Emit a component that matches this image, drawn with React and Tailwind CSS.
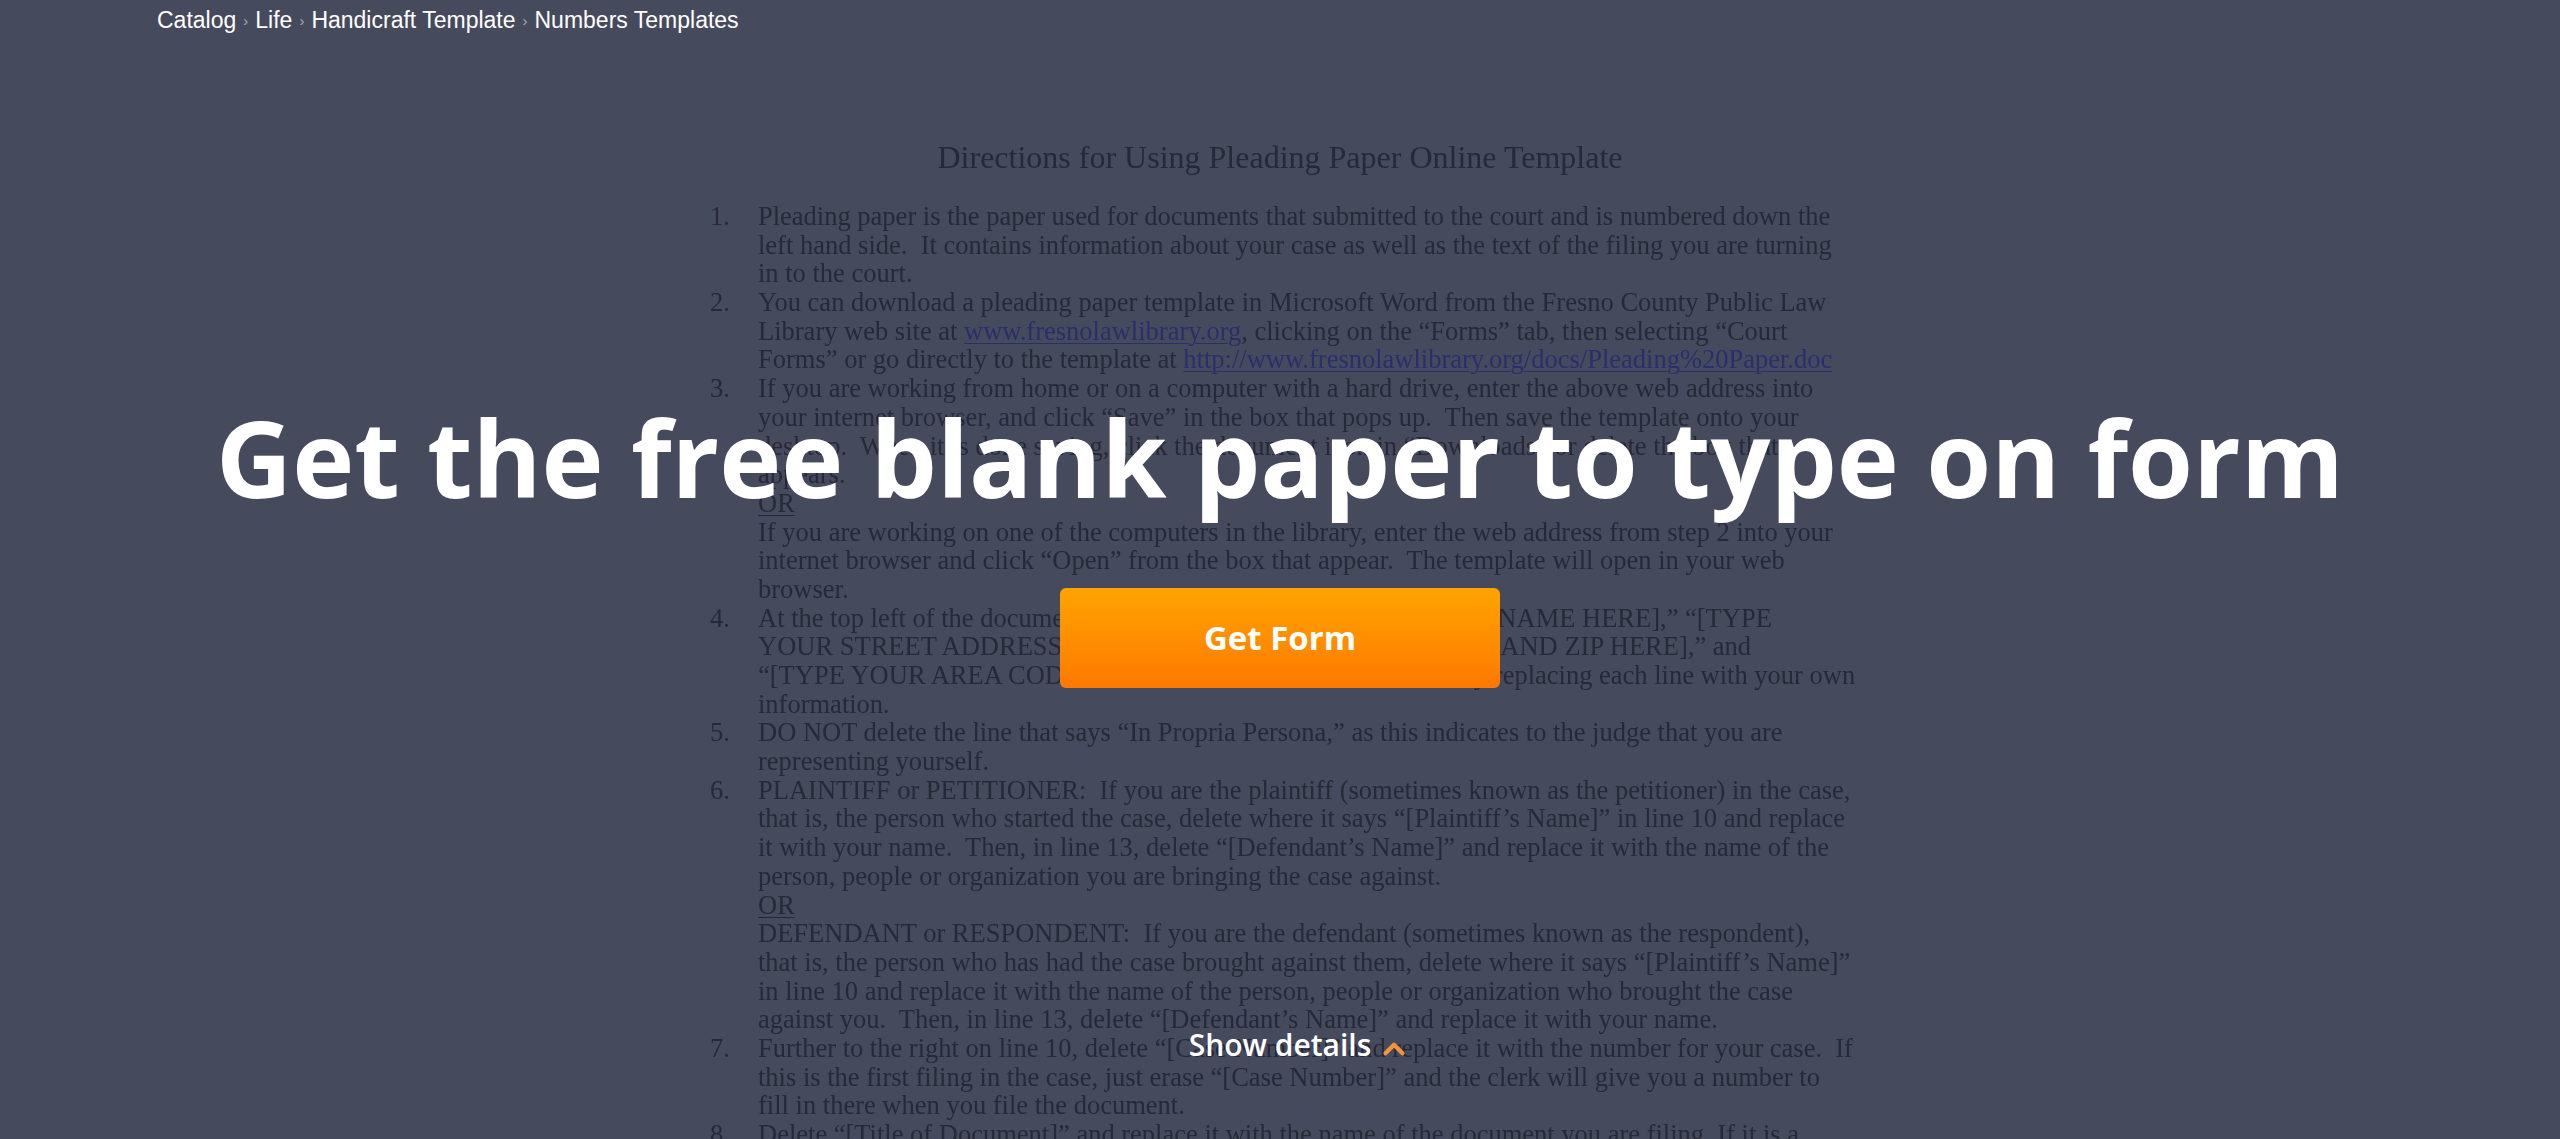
import { ChevronUp } from 'lucide-react';

const Link = ({ children }) => (
  <span className="text-[#2a2f6c] underline decoration-1 underline-offset-[3px]">{children}</span>
);

const Or = () => <span className="underline decoration-1 underline-offset-[3px]">OR</span>;

const items = [
  {
    n: '1.',
    lines: [
      'Pleading paper is the paper used for documents that submitted to the court and is numbered down the',
      'left hand side.  It contains information about your case as well as the text of the filing you are turning',
      'in to the court.',
    ],
  },
  {
    n: '2.',
    lines: [
      'You can download a pleading paper template in Microsoft Word from the Fresno County Public Law',
      <>Library web site at <Link>www.fresnolawlibrary.org</Link>, clicking on the “Forms” tab, then selecting “Court</>,
      <>Forms” or go directly to the template at <Link>http://www.fresnolawlibrary.org/docs/Pleading%20Paper.doc</Link></>,
    ],
  },
  {
    n: '3.',
    lines: [
      'If you are working from home or on a computer with a hard drive, enter the above web address into',
      'your internet browser, and click “Save” in the box that pops up.  Then save the template onto your',
      'desktop.  When it is done saving, click the document icon in “Downloads” or delete the box that',
      'appears.',
      <Or />,
      'If you are working on one of the computers in the library, enter the web address from step 2 into your',
      'internet browser and click “Open” from the box that appear.  The template will open in your web',
      'browser.',
    ],
  },
  {
    n: '4.',
    lines: [
      'At the top left of the document, type your name over “[TYPE YOUR NAME HERE],” “[TYPE',
      'YOUR STREET ADDRESS HERE],” “[TYPE YOUR CITY, STATE AND ZIP HERE],” and',
      '“[TYPE YOUR AREA CODE AND PHONE NUMBER HERE]” by replacing each line with your own',
      'information.',
    ],
  },
  {
    n: '5.',
    lines: [
      'DO NOT delete the line that says “In Propria Persona,” as this indicates to the judge that you are',
      'representing yourself.',
    ],
  },
  {
    n: '6.',
    lines: [
      'PLAINTIFF or PETITIONER:  If you are the plaintiff (sometimes known as the petitioner) in the case,',
      'that is, the person who started the case, delete where it says “[Plaintiff’s Name]” in line 10 and replace',
      'it with your name.  Then, in line 13, delete “[Defendant’s Name]” and replace it with the name of the',
      'person, people or organization you are bringing the case against.',
      <Or />,
      'DEFENDANT or RESPONDENT:  If you are the defendant (sometimes known as the respondent),',
      'that is, the person who has had the case brought against them, delete where it says “[Plaintiff’s Name]”',
      'in line 10 and replace it with the name of the person, people or organization who brought the case',
      'against you.  Then, in line 13, delete “[Defendant’s Name]” and replace it with your name.',
    ],
  },
  {
    n: '7.',
    lines: [
      'Further to the right on line 10, delete “[Case Number]” and replace it with the number for your case.  If',
      'this is the first filing in the case, just erase “[Case Number]” and the clerk will give you a number to',
      'fill in there when you file the document.',
    ],
  },
  {
    n: '8.',
    lines: [
      'Delete “[Title of Document]” and replace it with the name of the document you are filing. If it is a',
      'motion, include the date, time and department of the hearing on the right hand side of the title.',
    ],
  },
];

const crumbs = ['Catalog', 'Life', 'Handicraft Template', 'Numbers Templates'];

export default function App() {
  return (
    <div className="relative h-[1139px] overflow-hidden bg-[#464a5d]">
      {/* Breadcrumbs */}
      <nav className="flex items-center pl-[157px] pt-[7px] h-[33px] font-['Liberation_Sans',Arial,sans-serif] text-[23px] leading-[27px] text-white">
        {crumbs.map((c, i) => (
          <span key={c} className="flex items-center">
            {i > 0 && <span className="mx-[7px] text-[15px] text-[#a9acb8]">›</span>}
            <span>{c}</span>
          </span>
        ))}
      </nav>

      {/* Document preview */}
      <div className="mx-auto w-[1140px] pt-[106px] font-['Liberation_Serif','Times_New_Roman',serif] text-[#262937] blur-[0.6px] select-none">
        <h2 className="text-center text-[32px] leading-[36px]">Directions for Using Pleading Paper Online Template</h2>
        <div className="mt-[27px] text-[26.5px] leading-[28.68px]">
          {items.map(item => (
            <div key={item.n} className="flex">
              <div className="w-[48px] shrink-0">{item.n}</div>
              <div>
                {item.lines.map((line, i) => (
                  <div key={i} className="whitespace-pre">{line}</div>
                ))}
              </div>
            </div>
          ))}
        </div>
      </div>

      {/* Overlay */}
      <div className="absolute inset-0 flex flex-col items-center pt-[395px] font-['Open_Sans',sans-serif] text-white">
        <h1 className="text-[105px] font-bold leading-[126px] whitespace-nowrap">Get the free blank paper to type on form</h1>
        <button className="mt-[67px] h-[100px] w-[440px] rounded-[6px] bg-gradient-to-b from-[#ffa400] to-[#ff7800] text-[33px] font-bold text-white">
          Get Form
        </button>
        <div className="mt-auto mb-[74px] relative text-[30px] font-semibold leading-[40px]">
          Show details
          <ChevronUp className="absolute left-full top-[7px] ml-[6px] h-[34px] w-[34px] text-[#f5923e]" strokeWidth={3} />
        </div>
      </div>
    </div>
  );
}
